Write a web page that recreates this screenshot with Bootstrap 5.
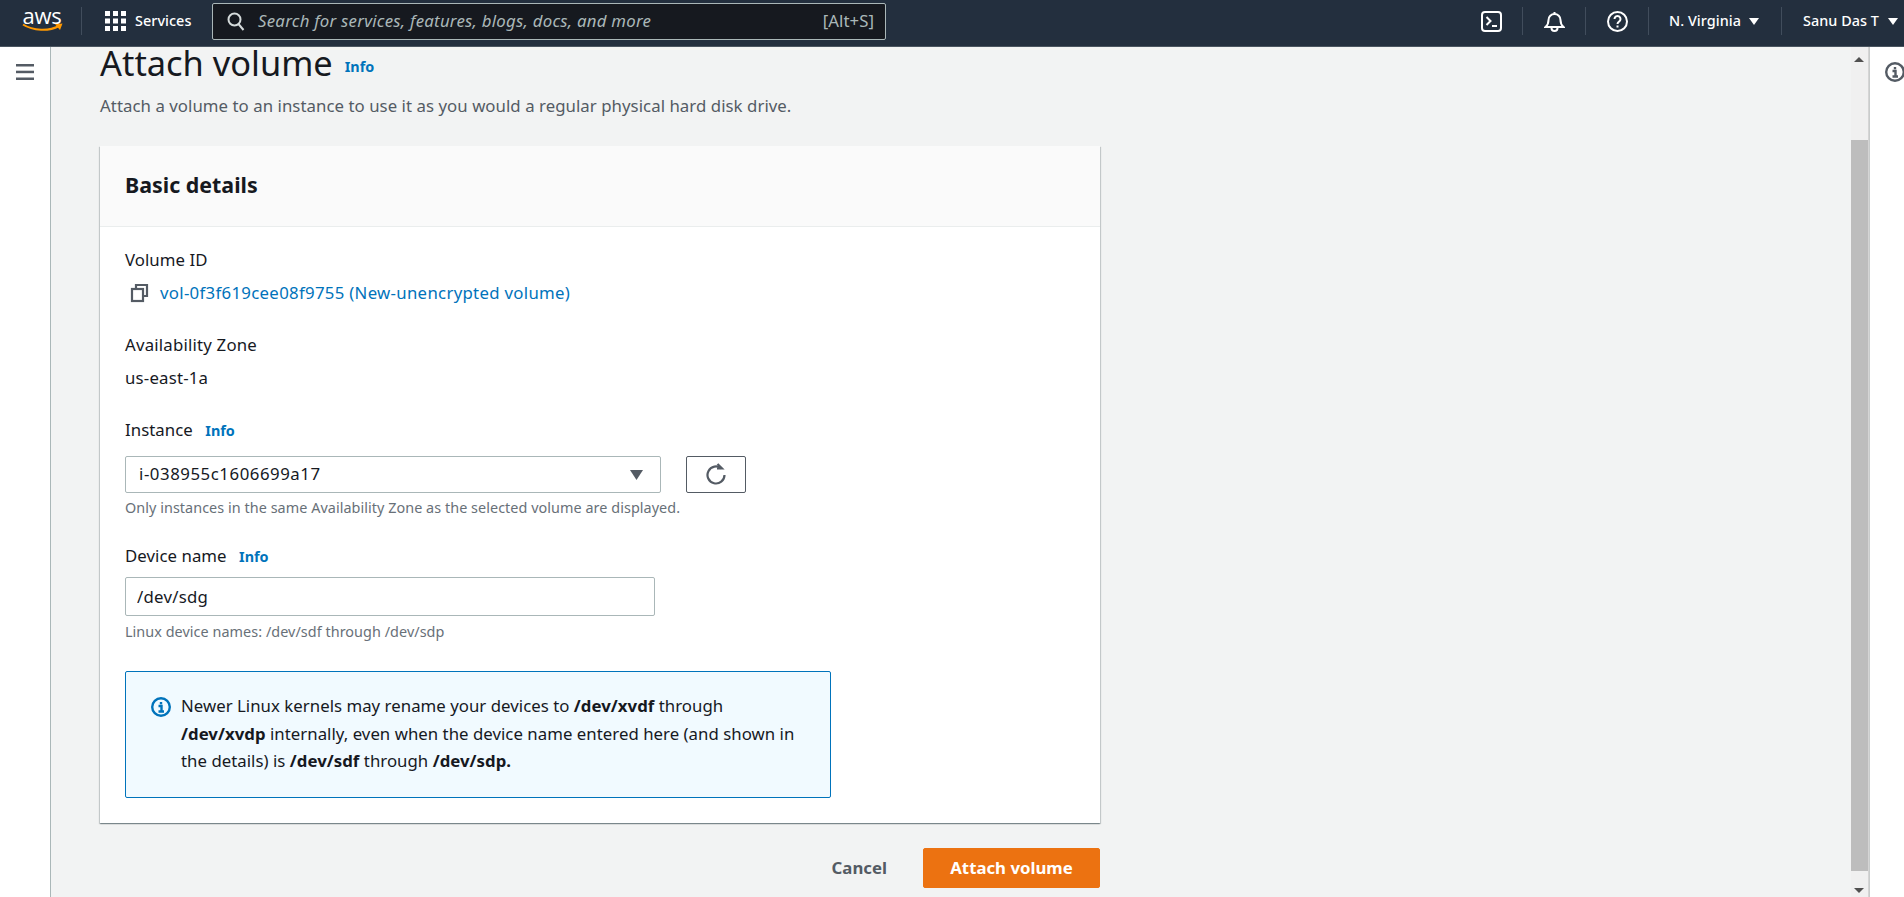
<!DOCTYPE html>
<html lang="en">
<head>
<meta charset="utf-8">
<title>Attach volume</title>
<link href="https://cdn.jsdelivr.net/npm/bootstrap@5.3.0/dist/css/bootstrap.min.css" rel="stylesheet">
<style>
html,body{height:100%;overflow:hidden}
body{font-family:"Noto Sans","Open Sans",sans-serif;font-size:16.8px;color:#16191f;background:#f2f3f3;line-height:1.4;letter-spacing:.05px}
a{text-decoration:none;color:#0073bb}
.top-bar{height:47px;background:#232f3e;border-bottom:1px solid #4a5560;padding:0 0 4px;flex-wrap:nowrap;color:#fff;font-size:14.4px;justify-content:flex-start}
.logo-box{display:flex;flex-direction:column;align-items:center;justify-content:center;width:60px;margin-left:12px}
.logo-word{font-family:"Open Sans",sans-serif;font-size:22px;line-height:16px;letter-spacing:-.3px;margin-top:-3px}
.top-sep{width:1px;height:28px;background:#414d5c;flex:none}
.sep-first{margin-left:9px}
.svc{margin-left:23px;gap:9px;font-weight:500;width:97px;flex:none}
.search-box{width:674px;height:37px;margin-left:10px;background:#16191f;border:1px solid #aab7b8;border-radius:2px;padding:0 11px 0 14px;gap:13px;color:#aab7b8;flex:none}
.search-box i{font-size:16.8px;font-style:italic;letter-spacing:.26px}
.search-hint{font-size:16.8px;margin-left:auto}
.top-right{margin-left:auto;height:42px}
.ic-cell{width:62px;justify-content:center;height:42px}
.region{width:132px;padding-left:20px;gap:8px;font-weight:500}
.user{padding-left:21px;gap:9px;font-weight:500;width:122px}
.tri{width:0;height:0;border-left:5px solid transparent;border-right:5px solid transparent;border-top:7px solid #fff;flex:none}
.shell{height:850px}
.left-rail{width:51px;background:#fff;border-right:1px solid #aab7b8;flex:none;padding:17px 0 0 16px}
.main-pane{padding:0 0 0 49px;min-width:0}
.page-title{font-size:34.4px;font-weight:400;line-height:32px;margin:0;letter-spacing:0}
.info-a{font-weight:700;font-size:14.4px;color:#0073bb;letter-spacing:0}
.page-sub{color:#545b64;margin:15px 0 0;line-height:24px}
.vol-card{width:1000px;border:0;border-radius:0;margin-top:28px;box-shadow:0 1px 1px 0 rgba(0,28,36,.3),1px 1px 1px 0 rgba(0,28,36,.15),-1px 1px 1px 0 rgba(0,28,36,.15)}
.vol-card .card-header{height:81px;background:#fafafa;border-bottom:1px solid #eaeded;border-radius:0;padding:0 25px 2px;display:flex;align-items:center}
.vol-card h2{font-size:21.4px;font-weight:700;margin:0;letter-spacing:0}
.vol-card .card-body{padding:21px 25px 0;height:596px}
.fld-label{line-height:24px;margin:0}
.fld-value{line-height:24px;margin:9px 0 0}
.wide-txt{letter-spacing:.2px}
.vol-link{letter-spacing:.3px;margin-left:10px}
.copy-ic{margin-left:5px;flex:none}
.fld{margin-top:28px}
.fld-dev{margin-top:26px}
.lab-gap{margin-bottom:13px}
.lab-gap2{margin-bottom:8px}
.hint{font-size:14.4px;color:#687078;line-height:20px;margin:0;letter-spacing:.05px}
.hint-sel{margin-top:5px}
.hint-dev{margin-top:6px}
.pick{width:536px;height:37px;border:1px solid #aab7b8;border-radius:2px;font-size:16.8px;letter-spacing:.55px;color:#16191f;padding:0 13px;line-height:1.2;background-image:url("data:image/svg+xml,%3Csvg xmlns='http://www.w3.org/2000/svg' viewBox='0 0 13 10'%3E%3Cpath d='M0 0h13L6.500 10z' fill='%23545b64'/%3E%3C/svg%3E");background-size:13px 10px;background-position:right 17px center}
.reload{width:60px;height:37px;border:1px solid #545b64;border-radius:2px;background:#fff;padding:0 0 2px;margin-left:25px;display:flex;align-items:center;justify-content:center}
.dev-in{width:530px;height:39px;border:1px solid #aab7b8;border-radius:2px;font-size:16.8px;letter-spacing:.25px;color:#16191f;padding:0 11px}
.note{width:706px;height:127px;margin:29px 0 0;background:#f1faff;border:1px solid #0073bb;border-radius:2px;padding:20px 10px 0 25px;gap:10px;color:#16191f;line-height:27.6px;letter-spacing:.03px}
.note svg{flex:none;margin-top:5px}
.foot{width:1000px;height:40px;margin-top:25px;justify-content:flex-end}
.btn-cancel{color:#545b64;font-weight:700;font-size:16.8px;padding:0;border:0;margin-right:36px}
.btn-attach{width:177px;height:40px;background:#ec7211;border:1px solid #ec7211;border-radius:2px;color:#fff;font-weight:700;font-size:16.8px;padding:0}
.fake-bar{width:18px;background:#f0f0f0;flex:none;display:flex;flex-direction:column;align-items:flex-start;border-right:1px solid #d5d5d5}
.sb-up{border-left:5px solid transparent;border-right:5px solid transparent;border-bottom:5px solid #505050;margin:10px 0 0 3px;height:0;width:0}
.sb-gap{height:78px;flex:none}
.sb-thumb{height:731px;width:17px;background:#bdbdbd;flex:none}
.sb-down{border-left:5px solid transparent;border-right:5px solid transparent;border-top:5px solid #505050;margin:17px 0 0 3px;height:0;width:0}
.right-rail{width:35px;background:#fff;border-left:1px solid #c9cccc;flex:none;padding:15px 0 0 15px;overflow:hidden}
.right-rail svg{display:block}
</style>
</head>
<body>
<nav class="navbar top-bar d-flex align-items-center">
  <div class="logo-box">
    <span class="logo-word">aws</span>
    <svg width="41" height="9" viewBox="0 0 41 9"><path d="M1 1.500C11 8 27 8.500 37 3" fill="none" stroke="#ff9900" stroke-width="2"/><path d="M33 1.200L40.500 .6 38 7z" fill="#ff9900"/></svg>
  </div>
  <div class="top-sep sep-first"></div>
  <div class="svc d-flex align-items-center">
    <svg width="21" height="20" viewBox="0 0 21 20" fill="#fff"><rect x="0" y="0" width="5" height="5"/><rect x="8" y="0" width="5" height="5"/><rect x="16" y="0" width="5" height="5"/><rect x="0" y="7.500" width="5" height="5"/><rect x="8" y="7.500" width="5" height="5"/><rect x="16" y="7.500" width="5" height="5"/><rect x="0" y="15" width="5" height="5"/><rect x="8" y="15" width="5" height="5"/><rect x="16" y="15" width="5" height="5"/></svg>
    <span>Services</span>
  </div>
  <div class="search-box d-flex align-items-center">
    <svg width="18" height="19" viewBox="0 0 18 19" fill="none" stroke="#d5dbdb" stroke-width="2"><circle cx="7.500" cy="7.500" r="6"/><path d="M11.500 12l5 6"/></svg>
    <i>Search for services, features, blogs, docs, and more</i>
    <span class="search-hint">[Alt+S]</span>
  </div>
  <div class="top-right d-flex align-items-center">
    <div class="ic-cell d-flex align-items-center"><svg width="21" height="21" viewBox="0 0 21 21" fill="none" stroke="#fff" stroke-width="2"><rect x="1" y="1" width="19" height="19" rx="3"/><path d="M5.500 6l4 4-4 4M11 15h5"/></svg></div>
    <div class="top-sep"></div>
    <div class="ic-cell d-flex align-items-center"><svg width="21" height="21" viewBox="0 0 21 21" fill="none" stroke="#fff" stroke-width="2"><path d="M10.500 1v2M1.500 16c2.500-2 3-4 3-7a6 6 0 0 1 12 0c0 3 .5 5 3 7z"/><path d="M7.500 17a3 3 0 0 0 6 0"/></svg></div>
    <div class="top-sep"></div>
    <div class="ic-cell d-flex align-items-center"><svg width="21" height="21" viewBox="0 0 21 21" fill="none" stroke="#fff" stroke-width="2"><circle cx="10.500" cy="10.500" r="9.500"/><path d="M7.500 8a3 3 0 1 1 4.500 2.600c-1 .6-1.500 1.200-1.500 2.400"/><path d="M10.500 14.500v2"/></svg></div>
    <div class="top-sep"></div>
    <div class="region d-flex align-items-center"><span>N. Virginia</span><span class="tri"></span></div>
    <div class="top-sep"></div>
    <div class="user d-flex align-items-center"><span>Sanu Das T</span><span class="tri"></span></div>
  </div>
</nav>
<div class="shell d-flex">
  <div class="left-rail">
    <svg width="18" height="16" viewBox="0 0 18 16" fill="#545b64" class="d-block"><rect width="18" height="2.500" y="0"/><rect width="18" height="2.500" y="6.700"/><rect width="18" height="2.500" y="13.500"/></svg>
  </div>
  <main class="main-pane flex-grow-1">
    <div class="d-flex align-items-center title-row">
      <h1 class="page-title me-2">Attach volume</h1>
      <a href="#" class="info-a mt-2 ms-1">Info</a>
    </div>
    <p class="page-sub">Attach a volume to an instance to use it as you would a regular physical hard disk drive.</p>
    <section class="card vol-card">
      <div class="card-header"><h2>Basic details</h2></div>
      <div class="card-body">
        <p class="fld-label">Volume ID</p>
        <div class="fld-value d-flex align-items-center">
          <svg class="copy-ic" width="20" height="20" viewBox="0 0 20 20" fill="none" stroke="#545b64" stroke-width="2.200"><rect x="2" y="6" width="11" height="12"/><path d="M6 6V2h11v11h-4"/></svg>
          <a href="#" class="vol-link">vol-0f3f619cee08f9755 (New-unencrypted volume)</a>
        </div>
        <div class="fld">
          <p class="fld-label wide-txt">Availability Zone</p>
          <p class="fld-value wide-txt">us-east-1a</p>
        </div>
        <div class="fld">
          <p class="fld-label lab-gap">Instance <a href="#" class="info-a ms-2">Info</a></p>
          <div class="d-flex">
            <select class="form-select pick"><option>i-038955c1606699a17</option></select>
            <button class="reload" type="button" aria-label="Refresh"><svg width="20" height="22" viewBox="0 0 20 22" fill="none" stroke="#545b64" stroke-width="2.200"><path d="M15.500 5.500A8.500 8.500 0 1 0 18.500 12"/><path d="M11.500 1l4.500 4.500h-5"/></svg></button>
          </div>
          <p class="hint hint-sel">Only instances in the same Availability Zone as the selected volume are displayed.</p>
        </div>
        <div class="fld-dev">
          <label class="fld-label d-block lab-gap2" for="dev">Device name <a href="#" class="info-a ms-2">Info</a></label>
          <input id="dev" class="form-control dev-in" value="/dev/sdg">
          <p class="hint hint-dev">Linux device names: /dev/sdf through /dev/sdp</p>
        </div>
        <div class="alert note d-flex">
          <svg width="20" height="20" viewBox="0 0 20 20" fill="none" stroke="#0073bb" stroke-width="2.400"><circle cx="10" cy="10" r="8.800"/><path d="M7.500 9h3v5M7.500 14.500h5.500M10 5v2.200"/></svg>
          <div>Newer Linux kernels may rename your devices to <b>/dev/xvdf</b> through<br><b>/dev/xvdp</b> internally, even when the device name entered here (and shown in<br>the details) is <b>/dev/sdf</b> through <b>/dev/sdp.</b></div>
        </div>
      </div>
    </section>
    <div class="foot d-flex align-items-center">
      <button class="btn btn-cancel" type="button">Cancel</button>
      <button class="btn btn-attach" type="button">Attach volume</button>
    </div>
  </main>
  <div class="fake-bar">
    <span class="sb-up"></span>
    <span class="sb-gap"></span>
    <span class="sb-thumb"></span>
    <span class="sb-down"></span>
  </div>
  <aside class="right-rail">
    <svg width="20" height="20" viewBox="0 0 20 20" fill="none" stroke="#545b64" stroke-width="2.400"><circle cx="10" cy="10" r="8.800"/><path d="M7.500 9h3v5M7.500 14.500h5.500M10 5v2.200"/></svg>
  </aside>
</div>
<script src="https://cdn.jsdelivr.net/npm/bootstrap@5.3.0/dist/js/bootstrap.bundle.min.js"></script>
</body>
</html>
